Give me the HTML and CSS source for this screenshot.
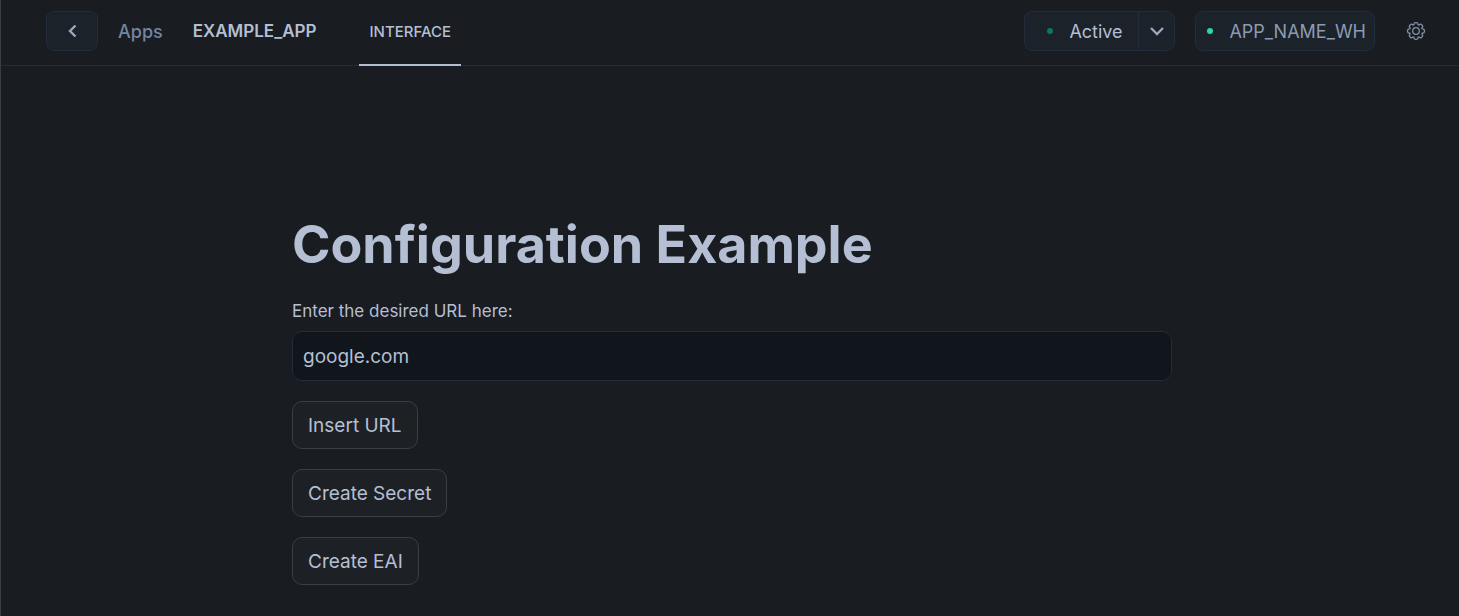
FILE: index.html
```html
<!DOCTYPE html>
<html lang="en">

<head>
    <meta charset="UTF-8">
    <meta name="viewport" content="width=device-width, initial-scale=1.0">
    <title>Configuration Example</title>
    <link rel="stylesheet" href="styles.css">
</head>

<body>
    <header class="topbar">
        <button type="button" class="box back" aria-label="Back">
            <svg width="10" height="14" viewBox="0 0 10 14"><path d="M8.500 1.500 3 7 8.500 12.500" /></svg>
        </button>
        <a class="crumb" href="#">Apps</a>
        <span class="app-name">EXAMPLE_APP</span>
        <nav class="tabs">
            <a class="tab" href="#">INTERFACE</a>
        </nav>

        <div class="box status">
            <button type="button" class="status-label"><span class="dot dim"></span>Active</button>
            <button type="button" class="status-menu" aria-label="Status menu">
                <svg width="14" height="10" viewBox="0 0 14 10"><path d="M1 2 7 8 13 2" /></svg>
            </button>
        </div>
        <button type="button" class="box warehouse"><span class="dot"></span>APP_NAME_WH</button>
        <button type="button" class="settings" aria-label="Settings">
            <svg width="20" height="20" viewBox="0 0 20 20">
                <path d="M7.900 3.700 Q8 1.600 9.200 1.600 H10.800 Q12 1.600 12.100 3.700 L13 4.100 Q14.600 2.700 15.400 3.500 L16.500 4.600 Q17.300 5.400 15.900 7 L16.300 7.900 Q18.400 8 18.400 9.200 V10.800 Q18.400 12 16.300 12.100 L15.900 13 Q17.300 14.600 16.500 15.400 L15.400 16.500 Q14.600 17.300 13 15.900 L12.100 16.300 Q12 18.400 10.800 18.400 H9.200 Q8 18.400 7.900 16.300 L7 15.900 Q5.400 17.300 4.600 16.500 L3.500 15.400 Q2.700 14.600 4.100 13 L3.700 12.100 Q1.600 12 1.600 10.800 V9.200 Q1.600 8 3.700 7.900 L4.100 7 Q2.700 5.400 3.500 4.600 L4.600 3.500 Q5.400 2.700 7 4.100 Z" />
                <circle cx="10" cy="10" r="3.300" />
            </svg>
        </button>
    </header>

    <main>
        <form class="config" onsubmit="return false">
            <h1>Configuration Example</h1>
            <label for="url">Enter the desired URL here:</label>
            <input type="text" id="url" name="url" value="google.com">
            <button type="button" class="action">Insert URL</button>
            <button type="button" class="action">Create Secret</button>
            <button type="button" class="action">Create EAI</button>
        </form>
    </main>
</body>

</html>
```
FILE: styles.css
```css
* {
    box-sizing: border-box;
}

body {
    margin: 0;
    min-height: 100vh;
    border-left: 1px solid #3b3e42;
    background-color: #191c20;
    color: #b5bfd3;
    font-family: Inter, "Liberation Sans", sans-serif;
}

button {
    padding: 0;
    border: none;
    background: none;
    color: inherit;
    font-family: inherit;
    cursor: pointer;
}

a {
    text-decoration: none;
}

svg {
    display: block;
    fill: none;
    stroke: #9aa7bd;
    stroke-width: 2.4;
}

/* top bar */
.topbar {
    display: flex;
    align-items: flex-start;
    height: 66px;
    padding: 11px 33px 0 45px;
    border-bottom: 1px solid #252c38;
    font-size: 18px;
    line-height: 41px;
}

.box {
    height: 40px;
    border: 1px solid #222c3b;
    border-radius: 8px;
    background-color: #1b2229;
    font-size: 18px;
}

.back {
    display: flex;
    align-items: center;
    justify-content: center;
    width: 52px;
}

.crumb {
    margin-left: 20px;
    color: #7485a1;
    font-weight: 500;
}

.app-name {
    margin-left: 30px;
    font-size: 17px;
    font-weight: 600;
}

.tabs {
    margin-left: 43px;
}

.tab {
    display: block;
    height: 55px;
    padding: 0 10px;
    border-bottom: 2px solid #b5bfd3;
    color: #b5bfd3;
    font-size: 15px;
    font-weight: 500;
}

.status {
    display: flex;
    margin-left: auto;
}

.status-label {
    display: flex;
    align-items: center;
    width: 114px;
    padding-left: 22px;
    border-right: 1px solid #222c3b;
    font-size: 18px;
}

.status-menu {
    display: flex;
    align-items: center;
    justify-content: center;
    width: 35px;
}

.dot {
    width: 6px;
    height: 6px;
    margin-right: 16px;
    border-radius: 50%;
    background-color: #2bd9a0;
}

.dot.dim {
    background-color: #087a56;
}

.warehouse {
    display: flex;
    align-items: center;
    margin-left: 20px;
    padding: 0 8px 0 11px;
    color: #8d9bb2;
}

.settings {
    margin: 10px 0 0 31px;
}

.settings svg {
    stroke: #8190a8;
    stroke-width: 1.3;
}

/* page content */
main {
    padding: 144px 20px 31px 24px;
}

.config {
    display: flex;
    flex-direction: column;
    align-items: flex-start;
    max-width: 880px;
    margin: 0 auto;
}

h1 {
    margin: 0 0 20px;
    font-size: 52px;
    font-weight: 700;
    line-height: 70px;
}

label {
    margin-bottom: 9px;
    font-size: 17px;
    line-height: 22px;
}

input[type="text"] {
    width: 100%;
    height: 50px;
    padding: 0 10px;
    border: 1px solid #222c3b;
    border-radius: 10px;
    outline: none;
    background-color: #11151c;
    color: #b5bfd3;
    font-family: inherit;
    font-size: 19px;
}

.action {
    height: 48px;
    margin-top: 20px;
    padding: 0 15px;
    border: 1px solid #3b3f43;
    border-radius: 10px;
    background-color: #1d2125;
    font-size: 19px;
}

.action:hover {
    border-color: #7485a1;
}
```
